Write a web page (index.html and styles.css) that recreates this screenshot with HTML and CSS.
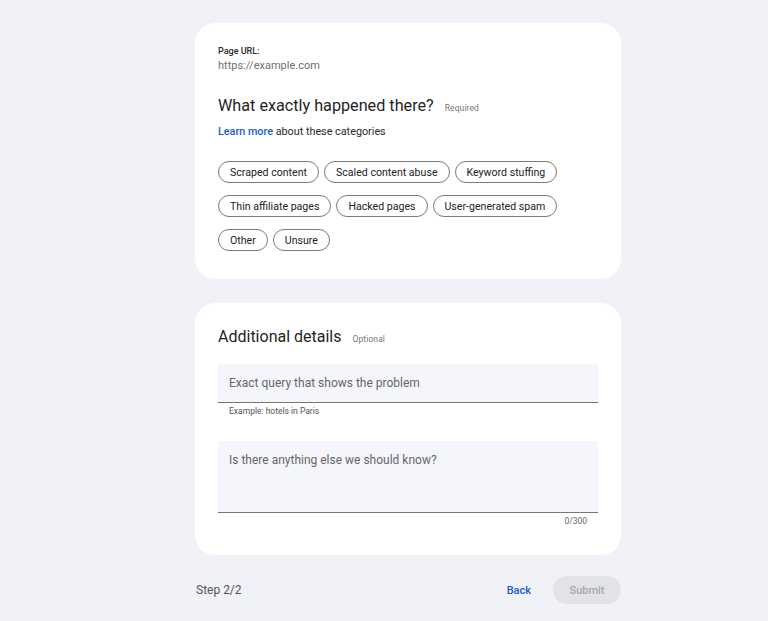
FILE: index.html
```html
<!DOCTYPE html>
<html>
<head>
<meta charset="utf-8">
<link rel="stylesheet" href="styles.css">
</head>
<body>
<div class="page">
  <section class="card card-top">
    <div class="label">Page URL:</div>
    <div class="url">https://example.com</div>
    <h2 class="title">What exactly happened there? <span class="tag">Required</span></h2>
    <p class="learn"><a class="link">Learn more</a> about these categories</p>
    <div class="chips">
      <span class="chip">Scraped content</span>
      <span class="chip">Scaled content abuse</span>
      <span class="chip">Keyword stuffing</span>
      <span class="chip">Thin affiliate pages</span>
      <span class="chip">Hacked pages</span>
      <span class="chip">User-generated spam</span>
      <span class="chip">Other</span>
      <span class="chip">Unsure</span>
    </div>
  </section>
  <section class="card card-bottom">
    <h2 class="title title2">Additional details <span class="tag">Optional</span></h2>
    <div class="field">Exact query that shows the problem</div>
    <div class="helper">Example: hotels in Paris</div>
    <div class="field area">Is there anything else we should know?</div>
    <div class="counter">0/300</div>
  </section>
  <footer class="footer">
    <span class="step">Step 2/2</span>
    <div class="actions">
      <span class="back">Back</span>
      <span class="submit">Submit</span>
    </div>
  </footer>
</div>
</body>
</html>
```
FILE: styles.css
```css
* { box-sizing: border-box; }
html, body { margin: 0; padding: 0; }
body {
  background: #f0f2f7;
  font-family: Roboto, "Liberation Sans", sans-serif;
  color: #1f1f1f;
  width: 768px;
  height: 621px;
  overflow: hidden;
}
.page {
  width: 426px;
  margin-left: 195px;
  padding-top: 23px;
}
.card {
  background: #fff;
  border-radius: 20px;
  padding: 22px 23px 28px 23px;
}
.card-bottom {
  margin-top: 24px;
  padding-top: 23px;
}
.label {
  font-size: 9px;
  line-height: 12px;
  font-weight: 500;
  color: #2a2a2a;
}
.url {
  font-size: 11px;
  line-height: 14px;
  margin-top: 2px;
  color: #6f6f6f;
}
.title {
  margin: 22px 0 0 0;
  font-size: 16.2px;
  line-height: 22px;
  font-weight: 400;
  color: #1f1f1f;
  display: flex;
  align-items: center;
}
.title2 { margin-top: 0; font-size: 16px; }
.tag {
  font-size: 8.5px;
  line-height: 10px;
  color: #777;
  margin-left: 11px;
  margin-top: 3px;
  letter-spacing: 0.1px;
}
.learn {
  margin: 8px 0 0 0;
  font-size: 10.8px;
  line-height: 14px;
  color: #2a2a2a;
}
.link {
  color: #1a5cc8;
  font-weight: 500;
}
.chips {
  margin-top: 22px;
  display: flex;
  flex-wrap: wrap;
  gap: 12px 5px;
  width: 360px;
}
.chip {
  height: 22px;
  border: 1px solid #7a7a7a;
  border-radius: 11px;
  padding: 0 11px;
  font-size: 10.6px;
  font-weight: 400;
  color: #222;
  display: inline-flex;
  align-items: center;
}
.field {
  margin-top: 16px;
  height: 39px;
  background: #f5f6fc;
  border-bottom: 1px solid #777;
  border-radius: 3px 3px 0 0;
  padding: 0 11px;
  font-size: 12px;
  color: #666;
  display: flex;
  align-items: center;
}
.field.area {
  margin-top: 24px;
  height: 72px;
  align-items: flex-start;
  padding-top: 11px;
  line-height: 16px;
}
.helper {
  margin-top: 2px;
  padding-left: 11px;
  font-size: 8.5px;
  line-height: 12px;
  color: #555;
}
.counter {
  margin-top: 2px;
  padding-right: 11px;
  text-align: right;
  font-size: 8.5px;
  line-height: 12px;
  color: #666;
}
.footer {
  margin-top: 21px;
  display: flex;
  justify-content: space-between;
  align-items: center;
}
.step {
  font-size: 12px;
  color: #555;
  padding-left: 1px;
}
.actions {
  display: flex;
  align-items: center;
  gap: 22px;
}
.back {
  font-size: 11px;
  font-weight: 500;
  color: #1a5cc8;
}
.submit {
  width: 68px;
  height: 28px;
  border-radius: 14px;
  background: #e2e3e7;
  color: #a6a8ad;
  font-size: 11px;
  font-weight: 500;
  display: flex;
  align-items: center;
  justify-content: center;
}
```
